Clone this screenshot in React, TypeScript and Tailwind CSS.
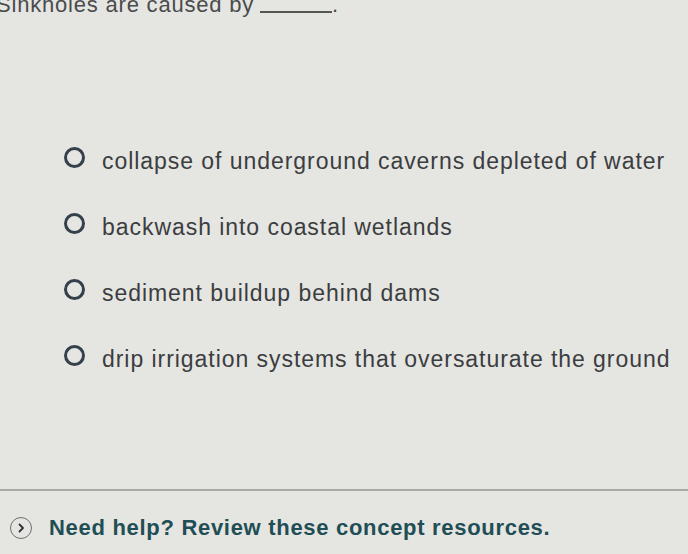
const options = [
  "collapse of underground caverns depleted of water",
  "backwash into coastal wetlands",
  "sediment buildup behind dams",
  "drip irrigation systems that oversaturate the ground",
];

export default function App() {
  return (
    <div
      className="flex h-[554px] w-[688px] flex-col overflow-hidden bg-[#e5e5e2] text-[#3b3d40]"
      style={{ fontFamily: "'Liberation Sans', Arial, sans-serif" }}
    >
      <div className="-mt-[8px] flex items-end text-[22px] leading-[26px] tracking-[0.8px] text-[#4a4b4d]">
        <span className="-ml-[4px]">Sinkholes are caused by</span>
        <span className="mb-[5px] ml-[6px] inline-block h-[2px] w-[72px] bg-[#555]" />
        <span>.</span>
      </div>

      <div className="mt-[126px] flex flex-col gap-[40px] pl-[64px]">
        {options.map((o) => (
          <label key={o} className="flex h-[26px] items-center gap-[17px]">
            <span className="h-[21px] w-[21px] shrink-0 rounded-full border-[3px] border-[#34404a]" />
            <span className="mt-[8px] text-[23px] leading-[26px] tracking-[0.95px]">{o}</span>
          </label>
        ))}
      </div>

      <div className="mt-[121px] h-[1.5px] w-full bg-[#a9aaa8]" />

      <div className="mt-[24px] flex items-center gap-[17px] pl-[10px]">
        <span className="flex h-[22px] w-[22px] items-center justify-center rounded-full border-[1.5px] border-[#6d6f70]">
          <svg width="10" height="10" viewBox="0 0 10 10" fill="none">
            <path d="M3.5 1.5 L7 5 L3.5 8.5" stroke="#2d3438" strokeWidth="1.8" strokeLinecap="round" strokeLinejoin="round" />
          </svg>
        </span>
        <span className="text-[22px] font-bold leading-[26px] tracking-[0.7px] text-[#1f4e55]">
          Need help? Review these concept resources.
        </span>
      </div>
    </div>
  );
}
